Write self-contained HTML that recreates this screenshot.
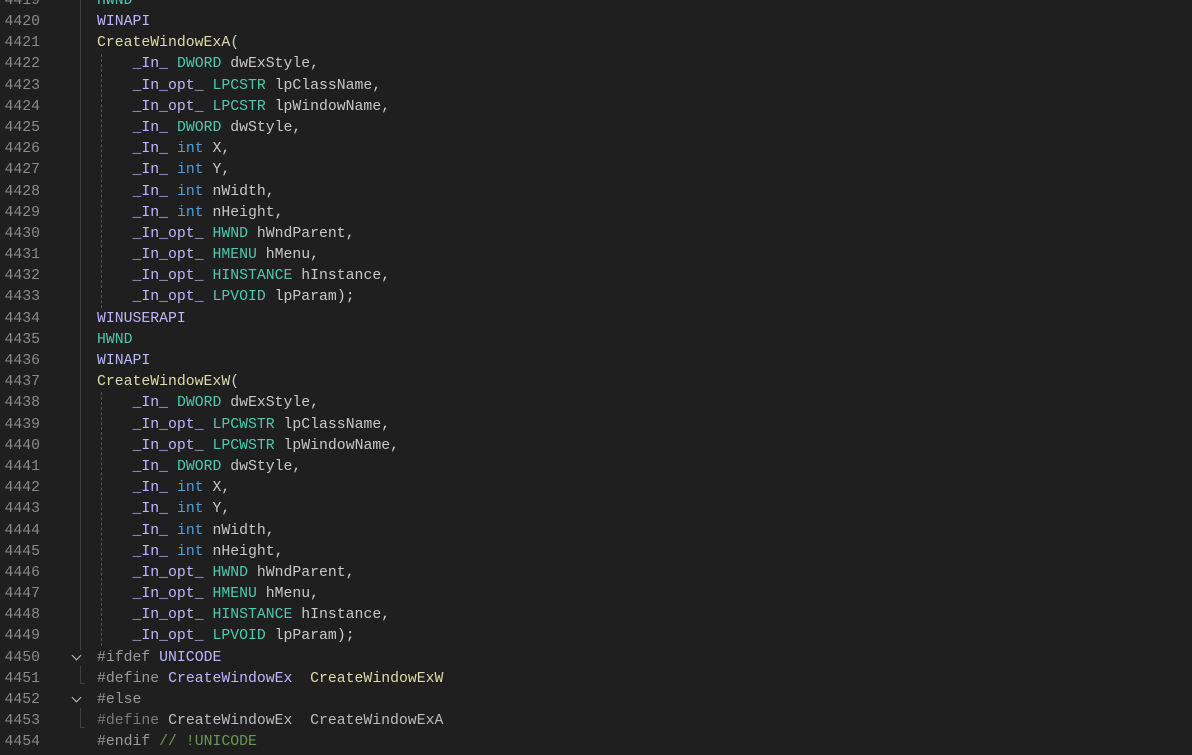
<!DOCTYPE html>
<html><head><style>
html,body{margin:0;padding:0;background:#1f1f1f;width:1192px;height:755px;overflow:hidden}
#w{position:absolute;left:0;font-family:"Liberation Mono",monospace;font-size:14.8px;top:-9.2px}
.l{height:21.2px;line-height:21.2px;white-space:pre;position:relative}
.n{position:absolute;left:0;width:40px;text-align:right;color:#8a8a8a}
.c{position:absolute;left:97px;color:#cccccc}
.m{color:#beb7ff}.f{color:#dcdcaa}.t{color:#4ec9b0}.k{color:#569cd6}.p{color:#c8c8c8}.g{color:#6a9955}.d{color:#9a9a9a}.x{color:#7a7a7a}.y{color:#bdbdbd}
.chev{position:absolute;left:73px;top:4px;width:6px;height:6px;border-right:1.3px solid #c5c5c5;border-bottom:1.3px solid #c5c5c5;transform:rotate(45deg)}
.vg{position:absolute;left:80px;width:1px;background:#404040}
.dg{position:absolute;left:101px;width:0;border-left:1px dashed #555}
</style></head><body>
<div class="vg" style="top:0;height:650px"></div>
<div class="vg" style="top:666px;height:18px"></div>
<div class="vg" style="top:708px;height:20px"></div>
<div style="position:absolute;left:80px;top:683px;width:5px;height:1px;background:#404040"></div>
<div style="position:absolute;left:80px;top:727px;width:5px;height:1px;background:#404040"></div>
<div class="dg" style="top:54px;height:254px"></div>
<div class="dg" style="top:392px;height:254px"></div>
<div id="w">
<div class="l"><span class="n">4419</span><span class="c t">HWND</span></div>
<div class="l"><span class="n">4420</span><span class="c m">WINAPI</span></div>
<div class="l"><span class="n">4421</span><span class="c"><span class="f">CreateWindowExA</span>(</span></div>
<div class="l"><span class="n">4422</span><span class="c">    <span class="m">_In_</span> <span class="t">DWORD</span> <span class="p">dwExStyle</span>,</span></div>
<div class="l"><span class="n">4423</span><span class="c">    <span class="m">_In_opt_</span> <span class="t">LPCSTR</span> <span class="p">lpClassName</span>,</span></div>
<div class="l"><span class="n">4424</span><span class="c">    <span class="m">_In_opt_</span> <span class="t">LPCSTR</span> <span class="p">lpWindowName</span>,</span></div>
<div class="l"><span class="n">4425</span><span class="c">    <span class="m">_In_</span> <span class="t">DWORD</span> <span class="p">dwStyle</span>,</span></div>
<div class="l"><span class="n">4426</span><span class="c">    <span class="m">_In_</span> <span class="k">int</span> <span class="p">X</span>,</span></div>
<div class="l"><span class="n">4427</span><span class="c">    <span class="m">_In_</span> <span class="k">int</span> <span class="p">Y</span>,</span></div>
<div class="l"><span class="n">4428</span><span class="c">    <span class="m">_In_</span> <span class="k">int</span> <span class="p">nWidth</span>,</span></div>
<div class="l"><span class="n">4429</span><span class="c">    <span class="m">_In_</span> <span class="k">int</span> <span class="p">nHeight</span>,</span></div>
<div class="l"><span class="n">4430</span><span class="c">    <span class="m">_In_opt_</span> <span class="t">HWND</span> <span class="p">hWndParent</span>,</span></div>
<div class="l"><span class="n">4431</span><span class="c">    <span class="m">_In_opt_</span> <span class="t">HMENU</span> <span class="p">hMenu</span>,</span></div>
<div class="l"><span class="n">4432</span><span class="c">    <span class="m">_In_opt_</span> <span class="t">HINSTANCE</span> <span class="p">hInstance</span>,</span></div>
<div class="l"><span class="n">4433</span><span class="c">    <span class="m">_In_opt_</span> <span class="t">LPVOID</span> <span class="p">lpParam</span>);</span></div>
<div class="l"><span class="n">4434</span><span class="c m">WINUSERAPI</span></div>
<div class="l"><span class="n">4435</span><span class="c t">HWND</span></div>
<div class="l"><span class="n">4436</span><span class="c m">WINAPI</span></div>
<div class="l"><span class="n">4437</span><span class="c"><span class="f">CreateWindowExW</span>(</span></div>
<div class="l"><span class="n">4438</span><span class="c">    <span class="m">_In_</span> <span class="t">DWORD</span> <span class="p">dwExStyle</span>,</span></div>
<div class="l"><span class="n">4439</span><span class="c">    <span class="m">_In_opt_</span> <span class="t">LPCWSTR</span> <span class="p">lpClassName</span>,</span></div>
<div class="l"><span class="n">4440</span><span class="c">    <span class="m">_In_opt_</span> <span class="t">LPCWSTR</span> <span class="p">lpWindowName</span>,</span></div>
<div class="l"><span class="n">4441</span><span class="c">    <span class="m">_In_</span> <span class="t">DWORD</span> <span class="p">dwStyle</span>,</span></div>
<div class="l"><span class="n">4442</span><span class="c">    <span class="m">_In_</span> <span class="k">int</span> <span class="p">X</span>,</span></div>
<div class="l"><span class="n">4443</span><span class="c">    <span class="m">_In_</span> <span class="k">int</span> <span class="p">Y</span>,</span></div>
<div class="l"><span class="n">4444</span><span class="c">    <span class="m">_In_</span> <span class="k">int</span> <span class="p">nWidth</span>,</span></div>
<div class="l"><span class="n">4445</span><span class="c">    <span class="m">_In_</span> <span class="k">int</span> <span class="p">nHeight</span>,</span></div>
<div class="l"><span class="n">4446</span><span class="c">    <span class="m">_In_opt_</span> <span class="t">HWND</span> <span class="p">hWndParent</span>,</span></div>
<div class="l"><span class="n">4447</span><span class="c">    <span class="m">_In_opt_</span> <span class="t">HMENU</span> <span class="p">hMenu</span>,</span></div>
<div class="l"><span class="n">4448</span><span class="c">    <span class="m">_In_opt_</span> <span class="t">HINSTANCE</span> <span class="p">hInstance</span>,</span></div>
<div class="l"><span class="n">4449</span><span class="c">    <span class="m">_In_opt_</span> <span class="t">LPVOID</span> <span class="p">lpParam</span>);</span></div>
<div class="l"><span class="n">4450</span><span class="chev"></span><span class="c"><span class="d">#ifdef</span> <span class="m">UNICODE</span></span></div>
<div class="l"><span class="n">4451</span><span class="c"><span class="d">#define</span> <span class="m">CreateWindowEx</span>  <span class="f">CreateWindowExW</span></span></div>
<div class="l"><span class="n">4452</span><span class="chev"></span><span class="c"><span class="d">#else</span></span></div>
<div class="l"><span class="n">4453</span><span class="c"><span class="x">#define</span> <span class="y">CreateWindowEx  CreateWindowExA</span></span></div>
<div class="l"><span class="n">4454</span><span class="c"><span class="d">#endif</span> <span class="g">// !UNICODE</span></span></div>
</div>
</body></html>
